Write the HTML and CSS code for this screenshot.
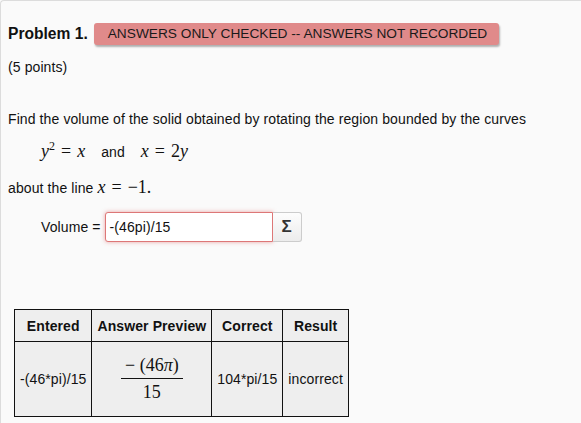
FILE: index.html
```html
<!DOCTYPE html>
<html>
<head>
<meta charset="utf-8">
<link rel="stylesheet" href="styles.css">
</head>
<body>
<div class="panel">
  <div class="header">
    <span class="ptitle">Problem 1.</span>
    <span class="badge">ANSWERS ONLY CHECKED -- ANSWERS NOT RECORDED</span>
  </div>
  <div class="points">(5 points)</div>
  <p class="q">Find the volume of the solid obtained by rotating the region bounded by the curves</p>
  <div class="eqs"><span class="m"><i>y</i><sup>2</sup><span class="eq">=</span><i>x</i></span><span class="and">and</span><span class="m"><i>x</i><span class="eq">=</span>2<i>y</i></span></div>
  <p class="about">about the line <span class="m"><i>x</i><span class="eq">=</span>−1.</span></p>
  <div class="answer">
    <span class="lbl">Volume =</span>
    <span class="field">-(46pi)/15</span>
    <span class="sigma">Σ</span>
  </div>
  <table class="results">
    <tr><th>Entered</th><th>Answer Preview</th><th>Correct</th><th>Result</th></tr>
    <tr>
      <td>-(46*pi)/15</td>
      <td class="prev"><span class="frac"><span class="num">− (46<i>π</i>)</span><span class="den">15</span></span></td>
      <td>104*pi/15</td>
      <td>incorrect</td>
    </tr>
  </table>
</div>
</body>
</html>
```
FILE: styles.css
```css
html, body { margin: 0; padding: 0; background: #fafafa; }
body { font-family: "Liberation Sans", Arial, sans-serif; font-size: 14px; letter-spacing: 0.1px; color: #111; }
.panel {
  height: 423px;
  box-sizing: border-box;
  border-top: 1px solid #dcdcdc;
  border-left: 1px solid #dcdcdc;
  border-top-left-radius: 4px;
  padding: 21px 0 0 7px;
}
.header { display: flex; align-items: center; gap: 6px; height: 23px; }
.ptitle { font-weight: bold; font-size: 15.6px; letter-spacing: 0; }
.badge {
  background: #e08a8a;
  border-radius: 3px;
  box-shadow: 1px 2px 2px rgba(0,0,0,0.3);
  font-size: 13.7px;
  letter-spacing: 0;
  padding: 3px 12px 3px 14px;
  line-height: 16px;
  color: #1a1a1a;
}
.points { margin-top: 14px; }
.q { margin: 36px 0 0 0; }
.eqs { margin: 12px 0 0 33px; display: flex; gap: 16px; align-items: baseline; }
.m { font-family: "Liberation Serif", "Times New Roman", serif; font-size: 18px; letter-spacing: 0; }
.m .eq { margin: 0 6px; }
.m sup { font-size: 12px; vertical-align: 7px; margin-left: 0; }
.and { font-size: 14px; }
.about { margin: 15px 0 0 0; }
.answer { display: flex; align-items: center; margin: 14px 0 0 33px; }
.lbl { margin-right: 4px; }
.field {
  width: 158px; height: 28px; line-height: 28px;
  border: 1px solid #d77; border-radius: 3px 0 0 3px;
  background: #fff; padding: 0 4px;
  box-shadow: 0 0 4px rgba(220,80,80,0.5);
  font-size: 14px;
}
.sigma {
  width: 28px; height: 28px; line-height: 28px; text-align: center;
  border: 1px solid #ccc; border-left: none; border-radius: 0 3px 3px 0;
  background: linear-gradient(#fdfdfd, #ececec);
  font-weight: bold; font-size: 17px; color: #333;
}
.results { border-collapse: collapse; margin: 67px 0 0 6px; background: #eee; }
.results th, .results td { border: 1px solid #111; padding: 0 5px; text-align: center; font-size: 14px; }
.results th { height: 31px; font-weight: bold; }
.results td { height: 74px; }
.frac { display: inline-flex; flex-direction: column; align-items: center; font-family: "Liberation Serif", serif; font-size: 18px; letter-spacing: 0; }
.num { border-bottom: 1px solid #111; padding: 0 4px 2px; }
.den { padding-top: 3px; }
```
